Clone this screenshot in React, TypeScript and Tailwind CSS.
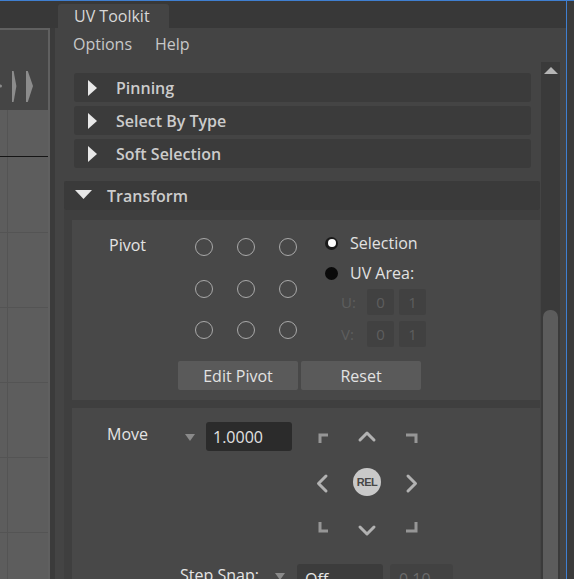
import React from "react";

function RightTri() {
  return (
    <svg width="9" height="16" viewBox="0 0 9 16" className="shrink-0">
      <path d="M0 0L9 8L0 16Z" fill="#e8e8e8" />
    </svg>
  );
}

function Collapsed({ label }: { label: string }) {
  return (
    <div className="h-[29px] rounded-[3px] bg-[#3b3b3b] flex items-center pl-[14px]">
      <RightTri />
      <span className="ml-[19px] mt-[1px] text-[16px] leading-[22px] font-semibold text-[#cccccc]">{label}</span>
    </div>
  );
}

function PivotDot() {
  return <div className="w-[18px] h-[18px] rounded-full border-[1.5px] border-[#a9a9a9]" />;
}

function NumBox({ v }: { v: string }) {
  return (
    <div className="w-[27px] h-[26px] rounded-[2px] bg-[#414141] flex items-center justify-center text-[15px] text-[#5e5e5e]">
      {v}
    </div>
  );
}

function SmallDown() {
  return (
    <svg width="10" height="7" viewBox="0 0 10 7" className="shrink-0">
      <path d="M0 0H10L5 7Z" fill="#8a8a8a" />
    </svg>
  );
}

function PadIcon({ d, color = "#a0a0a0" }: { d: string; color?: string }) {
  return (
    <svg width="44" height="44" viewBox="0 0 44 44">
      <path d={d} fill="none" stroke={color} strokeWidth="3" strokeLinejoin="miter" strokeLinecap="butt" />
    </svg>
  );
}

function PadChevron({ d }: { d: string }) {
  return (
    <svg width="44" height="44" viewBox="0 0 44 44">
      <path d={d} fill="none" stroke="#b2b2b2" strokeWidth="3" strokeLinejoin="round" strokeLinecap="round" />
    </svg>
  );
}

export default function App() {
  return (
    <div className="w-[574px] h-[579px] overflow-hidden bg-[#444444] flex flex-col font-['Open_Sans',sans-serif] text-[16px] leading-[22px]">
      <div className="h-[1px] bg-[#3f7fd1] shrink-0" />
      <div className="flex flex-1 min-h-0">
        <div className="w-[566px] flex flex-col">
          {/* title bar */}
          <div className="h-[27px] bg-[#383838] flex shrink-0">
            <div className="w-[58px]" />
            <div className="mt-[3px] w-[111px] bg-[#444444] rounded-t-[3px] flex items-center pl-[16px] text-[#d8d8d8]">
              UV Toolkit
            </div>
          </div>
          <div className="flex flex-1 min-h-0">
            {/* left viewport */}
            <div className="w-[50px] flex flex-col border-t-2 border-r-2 border-[#606060]">
              <div className="h-[80px] bg-[#454545] shrink-0">
                <svg width="48" height="80" viewBox="0 0 48 80">
                  <circle cx="0.5" cy="56" r="1.5" fill="#8a8a8a" />
                  <path d="M12 41H13.6L16.4 56L13.6 72H12Z" fill="#8c8c8c" />
                  <path d="M26 41H27.8L33 56L27.8 72H26Z" fill="#8c8c8c" />
                </svg>
              </div>
              <div className="flex-1 bg-[#5d5d5d] overflow-hidden">
                <svg width="48" height="470" viewBox="0 0 48 470">
                  <line x1="7.5" y1="0" x2="7.5" y2="470" stroke="#545454" strokeWidth="1" />
                  <line x1="0" y1="122.5" x2="48" y2="122.5" stroke="#545454" strokeWidth="1" />
                  <line x1="0" y1="197.5" x2="48" y2="197.5" stroke="#545454" strokeWidth="1" />
                  <line x1="0" y1="272.5" x2="48" y2="272.5" stroke="#545454" strokeWidth="1" />
                  <line x1="0" y1="347.5" x2="48" y2="347.5" stroke="#545454" strokeWidth="1" />
                  <line x1="0" y1="422.5" x2="48" y2="422.5" stroke="#545454" strokeWidth="1" />
                  <line x1="0" y1="46.5" x2="48" y2="46.5" stroke="#151515" strokeWidth="1.2" />
                </svg>
              </div>
            </div>
            <div className="w-[5px] bg-[#3b3b3b]" />
            {/* right panel */}
            <div className="flex-1 flex flex-col min-w-0">
              <div className="h-[34px] shrink-0 flex pt-[5px] pl-[18px] text-[#c8c8c8]">
                <span>Options</span>
                <span className="ml-[23px]">Help</span>
              </div>
              <div className="flex flex-1 min-h-0">
                <div className="flex-1 min-w-0 overflow-hidden">
                  <div className="ml-[19px] mr-[10px] mt-[11px] flex flex-col gap-[4px]">
                    <Collapsed label="Pinning" />
                    <Collapsed label="Select By Type" />
                    <Collapsed label="Soft Selection" />
                  </div>
                  {/* Transform frame */}
                  <div className="ml-[9px] mr-[1px] mt-[13px] bg-[#3f3f3f]">
                    <div className="h-[29px] rounded-[3px] bg-[#3a3a3a] flex items-center pl-[11px]">
                      <svg width="17" height="9" viewBox="0 0 17 9" className="shrink-0 -mt-[2px]">
                        <path d="M0 0H17L8.5 9Z" fill="#e8e8e8" />
                      </svg>
                      <span className="ml-[15px] mt-[1px] font-semibold text-[#cccccc]">Transform</span>
                    </div>
                    <div className="pl-[8px] pt-[10px] flex flex-col gap-[8px]">
                      {/* Pivot section */}
                      <div className="bg-[#484848] h-[180px] flex flex-col">
                        <div className="flex h-[141px]">
                          <div className="w-[123px] pl-[37px] pt-[14px] text-[#e4e4e4]">Pivot</div>
                          <div className="pt-[18px]">
                            <div className="grid grid-cols-3 gap-x-[24px] gap-y-[23.5px]">
                              <PivotDot />
                              <PivotDot />
                              <PivotDot />
                              <PivotDot />
                              <PivotDot />
                              <PivotDot />
                              <PivotDot />
                              <PivotDot />
                              <PivotDot />
                            </div>
                          </div>
                          <div className="ml-[28px] pt-[12px] flex flex-col">
                            <div className="h-[22px] flex items-center">
                              <div className="w-[13px] h-[13px] rounded-full bg-[#1a1a1a] flex items-center justify-center">
                                <div className="w-[8px] h-[8px] rounded-full bg-white" />
                              </div>
                              <span className="ml-[12px] text-[#e2e2e2]">Selection</span>
                            </div>
                            <div className="h-[22px] mt-[8px] flex items-center">
                              <div className="w-[13px] h-[13px] rounded-full bg-[#0a0a0a]" />
                              <span className="ml-[12px] text-[#e2e2e2]">UV Area:</span>
                            </div>
                            <div className="mt-[5px] ml-[16px] flex items-center">
                              <span className="w-[26px] text-[15px] text-[#5e5e5e]">U:</span>
                              <div className="flex gap-[5px]">
                                <NumBox v="0" />
                                <NumBox v="1" />
                              </div>
                            </div>
                            <div className="mt-[6px] ml-[16px] flex items-center">
                              <span className="w-[26px] text-[15px] text-[#5e5e5e]">V:</span>
                              <div className="flex gap-[5px]">
                                <NumBox v="0" />
                                <NumBox v="1" />
                              </div>
                            </div>
                          </div>
                        </div>
                        <div className="ml-[106px] flex gap-[3px]">
                          <div className="w-[120px] h-[29px] rounded-[2px] bg-[#5a5a5a] flex items-center justify-center text-[#e2e2e2]">
                            Edit Pivot
                          </div>
                          <div className="w-[120px] h-[29px] rounded-[2px] bg-[#5a5a5a] flex items-center justify-center text-[#e2e2e2]">
                            Reset
                          </div>
                        </div>
                      </div>
                      {/* Move section */}
                      <div className="bg-[#484848] h-[200px]">
                        <div className="flex">
                          <div className="w-[113px] pl-[35px] pt-[15px] text-[#e4e4e4]">Move</div>
                          <div className="mt-[26px]">
                            <SmallDown />
                          </div>
                          <div className="ml-[11px] mt-[14px] w-[86px] h-[29px] rounded-[3px] bg-[#2b2b2b] flex items-center pl-[7px] text-[#e2e2e2]">
                            1.0000
                          </div>
                          <div className="ml-[9px] mt-[8px] grid grid-cols-3">
                            <PadIcon d="M19 27V19H27" color="#969696" />
                            <PadChevron d="M15 24L22 17L29 24" />
                            <PadIcon d="M17 19H27V27" color="#969696" />
                            <PadChevron d="M25 16L17.5 23.5L25 31" />
                            <div className="w-[44px] h-[44px] flex items-center justify-center">
                              <div className="w-[28px] h-[28px] rounded-full bg-[#c9c9c9] flex items-center justify-center font-['Liberation_Sans',sans-serif] font-bold text-[11px] leading-none tracking-[-0.5px] text-[#474747]">
                                REL
                              </div>
                            </div>
                            <PadChevron d="M19 16L26.5 23.5L19 31" />
                            <PadIcon d="M19 18V27H27" color="#969696" />
                            <PadChevron d="M15 23L22 30L29 23" />
                            <PadIcon d="M17 27H27V18" color="#969696" />
                          </div>
                        </div>
                        <div className="mt-[16px] flex">
                          <div className="w-[203px] pl-[108px] text-[#e4e4e4] whitespace-nowrap">Step Snap:</div>
                          <div className="mt-[9px]">
                            <SmallDown />
                          </div>
                          <div className="ml-[12px] w-[86px] h-[29px] rounded-[3px] bg-[#3c3c3c] flex items-center pl-[8px] text-[#e6e6e6]">
                            Off
                          </div>
                          <div className="ml-[7px] w-[63px] h-[29px] rounded-[3px] bg-[#424242] flex items-center pl-[9px] text-[#6a6a6a]">
                            0.10
                          </div>
                        </div>
                      </div>
                    </div>
                  </div>
                </div>
                {/* scrollbar */}
                <div className="w-[19px] bg-[#3a3a3a] flex flex-col items-center shrink-0">
                  <svg width="14" height="7" viewBox="0 0 14 7" className="mt-[5px] shrink-0">
                    <path d="M7 0L14 7H0Z" fill="#b5b5b5" />
                  </svg>
                  <div className="flex-1" />
                  <div className="w-[15px] h-[269px] rounded-t-[7px] bg-[#5c5c5c] shrink-0" />
                </div>
                <div className="w-[6px] shrink-0" />
              </div>
            </div>
          </div>
        </div>
        <div className="w-[1px] bg-[#3f7fd1]" />
        <div className="flex-1 bg-[#3a3a3a]" />
      </div>
    </div>
  );
}
